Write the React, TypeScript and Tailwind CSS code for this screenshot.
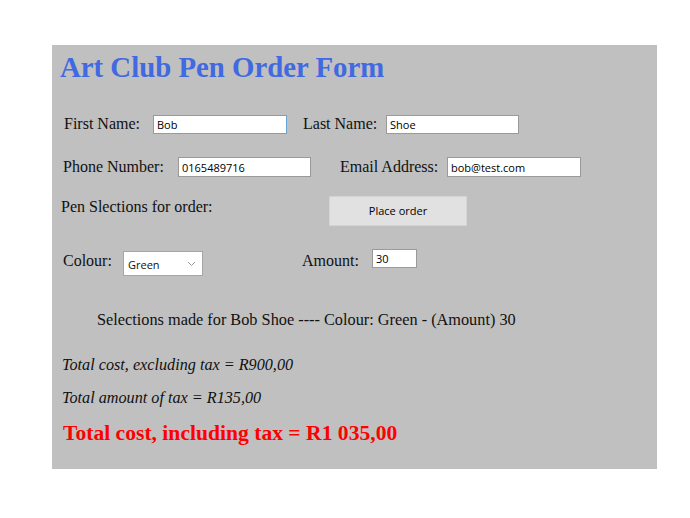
import React from "react";

const serif = "font-['Liberation_Serif',serif]";
const ui = "font-['Open_Sans',sans-serif]";

const Field = ({ value, className }: { value: string; className: string }) => (
    <input
        readOnly
        defaultValue={value}
        className={`${ui} bg-white text-[11px] text-black px-[3px] outline-none border ${className}`}
    />
);

const App = () => {
    return (
        <div className="min-h-[518px] w-full bg-white pt-[45px] pl-[52px]">
            <div className={`${serif} flex flex-col w-[605px] h-[424px] bg-[#c0c0c0] text-[#111] text-[16px]`}>
                <h1 className="mt-[7px] h-[32px] pl-[8px] flex items-center text-[28.8px] font-bold text-[#4169e1]">
                    Art Club Pen Order Form
                </h1>

                <div className="mt-[30px] h-[20px] pl-[12px] flex items-center">
                    <span className="w-[89px]">First Name:</span>
                    <Field value="Bob" className="w-[134px] h-[19px] border-[#6aa5d8]" />
                    <span className="ml-[16px] w-[83px]">Last Name:</span>
                    <Field value="Shoe" className="w-[133px] h-[19px] border-[#9a9a9a]" />
                </div>

                <div className="mt-[23px] h-[20px] pl-[11px] flex items-center">
                    <span className="w-[115px]">Phone Number:</span>
                    <Field value="0165489716" className="w-[133px] h-[20px] border-[#9a9a9a]" />
                    <span className="ml-[29px] w-[107px]">Email Address:</span>
                    <Field value="bob@test.com" className="w-[134px] h-[20px] border-[#9a9a9a]" />
                </div>

                <div className="mt-[19px] h-[30px] pl-[9px] flex items-start">
                    <span className="mt-[1px] w-[268px] leading-[20px]">Pen Slections for order:</span>
                    <button className={`${ui} w-[138px] h-[30px] bg-[#e1e1e1] border border-[#d4d4d4] text-[11px] text-black`}>
                        Place order
                    </button>
                </div>

                <div className="mt-[23px] h-[27px] pl-[11px] flex items-start">
                    <span className="mt-[2px] w-[60px] leading-[20px]">Colour:</span>
                    <div className={`${ui} mt-[2px] w-[80px] h-[25px] bg-white border border-[#a6a6a6] flex items-center justify-between pl-[4px] pr-[6px] pt-[3px] text-[11px]`}>
                        <span>Green</span>
                        <svg width="9" height="6" viewBox="0 0 9 6" fill="none" className="mb-[3px]">
                            <path d="M1 1l3.5 3.5L8 1" stroke="#9a9a9a" strokeWidth="1" />
                        </svg>
                    </div>
                    <span className="mt-[2px] ml-[99px] w-[70px] leading-[20px]">Amount:</span>
                    <Field value="30" className="w-[45px] h-[19px] border-[#9a9a9a]" />
                </div>

                <p className="mt-[34px] pl-[45px] leading-[20px] text-[16.3px]">
                    Selections made for Bob Shoe ---- Colour: Green - (Amount) 30
                </p>

                <p className="mt-[25px] pl-[10px] leading-[20px] italic text-[16.2px]">Total cost, excluding tax = R900,00</p>
                <p className="mt-[13px] pl-[10px] leading-[20px] italic text-[16.2px]">Total amount of tax = R135,00</p>

                <p className="mt-[12px] pl-[11px] leading-[26px] text-[21.6px] font-bold text-[#f00]">
                    Total cost, including tax = R1 035,00
                </p>
            </div>
        </div>
    );
};

export default App;
